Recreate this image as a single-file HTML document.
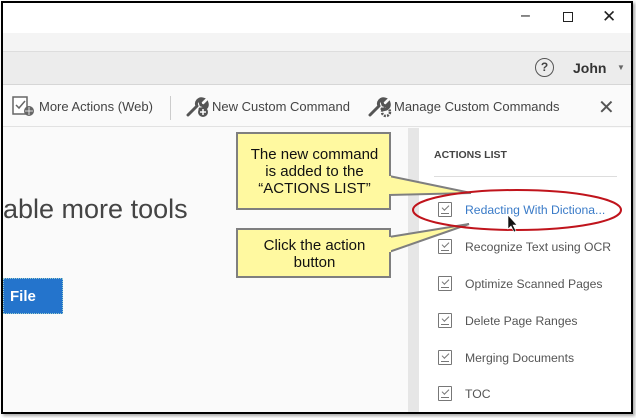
<!DOCTYPE html>
<html><head><style>
*{margin:0;padding:0;box-sizing:border-box}
body{width:636px;height:418px;background:#fff;position:relative;overflow:hidden;font-family:"Liberation Sans",sans-serif;}
.frame{position:absolute;left:1px;top:1px;width:632px;height:413px;border:2px solid #000;background:#fafafa;overflow:hidden;box-shadow:2px 2px 3px rgba(0,0,0,.35)}
.a{position:absolute}
.tb{font-size:13px;color:#444;white-space:nowrap}
.item{position:absolute;left:462px;font-size:12.2px;color:#555;white-space:nowrap}
.cb{position:absolute;left:435px;width:14px;height:15px;border:1.5px solid #777;border-radius:1px;background:#fff}
.cb:after{content:"";position:absolute;left:3px;top:2px;width:6px;height:3px;border-left:1.5px solid #777;border-bottom:1.5px solid #777;transform:rotate(-45deg)}
.cb:before{content:"";position:absolute;left:2px;right:2px;bottom:2px;border-top:1px solid #777}
.call{position:absolute;background:#fff9a0;border:2px solid #7f7f7f;font-size:15px;color:#111;text-align:center;line-height:17px}
</style></head><body>
<div class="frame">
 <div class="a" style="left:0;top:0;width:632px;height:30px;background:#fff"></div>
 <div class="a tb" style="left:518px;top:4px;font-size:16px;color:#222">–</div>
 <div class="a" style="left:560px;top:9px;width:10px;height:10px;border:1.3px solid #222"></div>
 <div class="a tb" style="left:599px;top:4px;font-size:17px;color:#222">✕</div>
 <div class="a" style="left:0;top:30px;width:632px;height:19px;background:#f4f4f4;border-bottom:1px solid #ddd"></div>
 <div class="a" style="left:0;top:49px;width:632px;height:33px;background:#ececec;border-bottom:1px solid #d6d6d6"></div>
 <div class="a" style="left:532px;top:55px;width:19px;height:19px;border:1.5px solid #555;border-radius:50%;font-size:12px;text-align:center;line-height:16px;color:#444;font-weight:bold">?</div>
 <div class="a" style="left:570px;top:57px;font-size:14px;font-weight:bold;color:#333">John</div>
 <div class="a" style="left:614px;top:60px;font-size:8px;color:#666">▼</div>
 <div class="a" style="left:0;top:83px;width:632px;height:41px;background:#fafafa;border-bottom:1px solid #e2e2e2"></div>
 <svg class="a" style="left:9px;top:93px" width="24" height="22"><rect x="1" y="1" width="14" height="17" fill="#fff" stroke="#666" stroke-width="1.5"/><path d="M4 9l3 3 6-7" fill="none" stroke="#666" stroke-width="1.5"/><circle cx="17" cy="15" r="5" fill="#666"/><path d="M13 15h8M17 11v8" stroke="#fff" stroke-width=".8"/></svg>
 <div class="a tb" style="left:36px;top:96px">More Actions (Web)</div>
 <div class="a" style="left:167px;top:93px;width:1px;height:24px;background:#ccc"></div>
 <svg class="a" style="left:182px;top:93px" width="24" height="22"><path d="M3 19L12 10M12 10a5 5 0 0 1 6-7l-3 3 1 3 3 1 3-3a5 5 0 0 1-7 6" fill="none" stroke="#555" stroke-width="3" stroke-linecap="round"/><circle cx="18" cy="16" r="5" fill="#555"/><path d="M15 16h6M18 13v6" stroke="#fff" stroke-width="1.5"/></svg>
 <div class="a tb" style="left:209px;top:96px">New Custom Command</div>
 <svg class="a" style="left:364px;top:93px" width="26" height="22"><path d="M3 19L12 10M12 10a5 5 0 0 1 6-7l-3 3 1 3 3 1 3-3a5 5 0 0 1-7 6" fill="none" stroke="#555" stroke-width="3" stroke-linecap="round"/><circle cx="19" cy="16" r="4" fill="none" stroke="#555" stroke-width="2.5" stroke-dasharray="2 1.2"/></svg>
 <div class="a tb" style="left:391px;top:96px">Manage Custom Commands</div>
 <div class="a" style="left:595px;top:92px;font-size:20px;color:#555">✕</div>
 <div class="a" style="left:0;top:191px;font-size:27px;color:#444;white-space:nowrap">able more tools</div>
 <div class="a" style="left:0;top:275px;width:60px;height:36px;background:#2474cc;border:1px dotted #9cc;color:#fff;font-weight:bold;font-size:15px;padding:9px 0 0 6px">File</div>
 <div class="a" style="left:405px;top:125px;width:11px;height:290px;background:#e6e6e6"></div>
 <div class="a" style="left:416px;top:125px;width:216px;height:290px;background:#fff"></div>
 <div class="a" style="left:431px;top:146px;font-size:10.5px;font-weight:bold;color:#444">ACTIONS LIST</div>
 <div class="a" style="left:431px;top:173px;width:183px;height:1px;background:#ddd"></div>
 <div class="cb" style="top:199px"></div><div class="item" style="top:200px;color:#3a7bc8">Redacting With Dictiona...</div>
 <div class="cb" style="top:236px"></div><div class="item" style="top:237px">Recognize Text using OCR</div>
 <div class="cb" style="top:273px"></div><div class="item" style="top:274px">Optimize Scanned Pages</div>
 <div class="cb" style="top:310px"></div><div class="item" style="top:311px">Delete Page Ranges</div>
 <div class="cb" style="top:347px"></div><div class="item" style="top:348px">Merging Documents</div>
 <div class="cb" style="top:383px"></div><div class="item" style="top:384px">TOC</div>
 <svg class="a" style="left:0;top:0" width="632" height="413">
  <polygon points="386,173 468,190 386,192" fill="#fff9a0" stroke="#7f7f7f" stroke-width="2"/>
  <polygon points="386,234 466,221 386,249" fill="#fff9a0" stroke="#7f7f7f" stroke-width="2"/>
  <ellipse cx="514" cy="207" rx="104" ry="20" fill="none" stroke="#c0141c" stroke-width="2"/>
  <path d="M505 212v14l3-3 3 6 2-1-3-6h4z" fill="#111" stroke="#fff" stroke-width=".6"/>
 </svg>
 <div class="call" style="left:233px;top:129px;width:155px;height:78px;padding-top:12px;border-right:none">The new command<br>is added to the<br>“ACTIONS LIST”</div>
 <div class="call" style="left:233px;top:225px;width:155px;height:50px;padding-top:7px;border-right:none">Click the action<br>button</div>
 <div class="a" style="left:386px;top:129px;width:2px;height:44px;background:#7f7f7f"></div>
 <div class="a" style="left:386px;top:191px;width:2px;height:16px;background:#7f7f7f"></div>
 <div class="a" style="left:386px;top:225px;width:2px;height:9px;background:#7f7f7f"></div>
 <div class="a" style="left:386px;top:249px;width:2px;height:26px;background:#7f7f7f"></div>
</div>
</body></html>
